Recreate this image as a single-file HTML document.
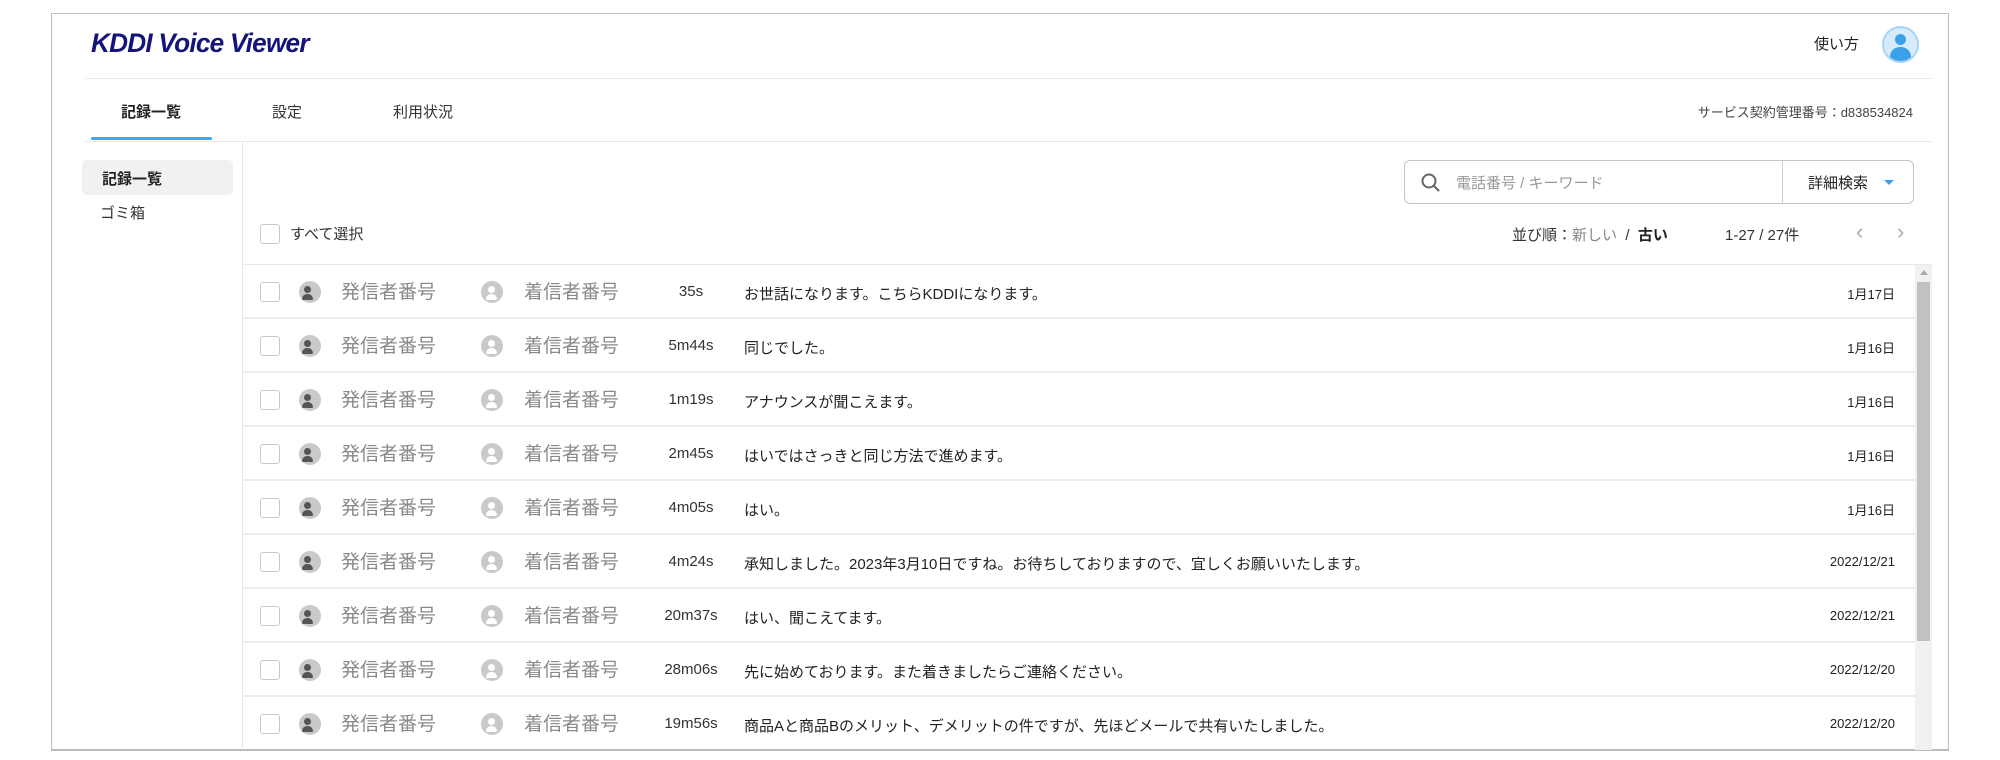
<!DOCTYPE html>
<html><head><meta charset="utf-8"><style>
*{margin:0;padding:0;box-sizing:border-box}
body{width:2000px;height:760px;background:#fff;font-family:"Liberation Sans","Noto Sans CJK JP",sans-serif;color:#222;position:relative;overflow:hidden}
.a{position:absolute;white-space:nowrap}
.card{position:absolute;left:51px;top:13px;width:1898px;height:738px;border:1px solid #bdbdbd;border-bottom:2px solid #bbb}
.hl{position:absolute;height:1px;background:#e8e8e8}
.cb{position:absolute;width:20px;height:20px;border:1px solid #c8c8c8;border-radius:3px;background:#fff}
.row{position:absolute;left:243px;width:1672px;height:54px;border-bottom:2px solid #ececec}
.ic{position:absolute;width:22px;height:22px;border-radius:50%;background:#c9c9c9;top:16px;overflow:hidden}
.ic:before{content:"";position:absolute;left:7px;top:5px;width:7px;height:7px;border-radius:50%;background:#fff}
.ic:after{content:"";position:absolute;left:5px;top:13px;width:11px;height:6px;border-radius:5px 5px 1px 1px;background:#fff}
.ic.s:before{left:5px;background:#555}
.ic.s:after{left:3px;background:#555}
.nm{position:absolute;top:12px;font-size:19px;color:#8a8a8a}
.du{position:absolute;left:398px;width:100px;text-align:center;top:18px;font-size:15px;color:#333}
.tx{position:absolute;left:501px;top:18px;font-size:15px;color:#222}
.dt{position:absolute;right:20px;top:19px;font-size:13px;color:#222}
</style></head><body>
<div class="card"></div>
<div class="a" style="left:91px;top:28px;font-size:27px;font-weight:bold;font-style:italic;color:#14147a;letter-spacing:-0.8px;transform:scaleX(0.97);transform-origin:left">KDDI Voice Viewer</div>
<div class="a" style="left:1814px;top:33px;font-size:15px">使い方</div>
<div class="a" style="left:1882px;top:26px;width:37px;height:37px;border-radius:50%;background:#d6ebfb;border:2px solid #a9d4f5;overflow:hidden">
<div style="position:absolute;left:11px;top:6px;width:11px;height:11px;border-radius:50%;background:#3aa0ea"></div>
<div style="position:absolute;left:6px;top:19px;width:21px;height:14px;border-radius:10px 10px 3px 3px;background:#3aa0ea"></div></div>
<div class="hl" style="left:85px;top:78px;width:1847px"></div>
<div class="a" style="left:121px;top:101px;font-size:15px;font-weight:bold">記録一覧</div>
<div class="a" style="left:272px;top:101px;font-size:15px;color:#333">設定</div>
<div class="a" style="left:393px;top:101px;font-size:15px;color:#333">利用状況</div>
<div class="a" style="left:91px;top:137px;width:121px;height:3px;background:#3ea6f0;border-radius:2px"></div>
<div class="a" style="right:87px;top:102px;font-size:13px;color:#444">サービス契約管理番号：d838534824</div>
<div class="hl" style="left:85px;top:141px;width:1847px"></div>
<div class="a" style="left:242px;top:142px;width:1px;height:608px;background:#e8e8e8"></div>
<div class="a" style="left:82px;top:160px;width:151px;height:35px;background:#f1f1f2;border-radius:5px"></div>
<div class="a" style="left:102px;top:168px;font-size:15px;font-weight:bold">記録一覧</div>
<div class="a" style="left:100px;top:202px;font-size:15px;color:#333">ゴミ箱</div>
<div class="a" style="left:1404px;top:160px;width:510px;height:44px;border:1px solid #c6c6c6;border-radius:6px"></div>
<div class="a" style="left:1782px;top:161px;width:1px;height:42px;background:#d0d0d0"></div>
<svg class="a" style="left:1420px;top:172px" width="22" height="22" viewBox="0 0 22 22"><circle cx="9" cy="9" r="6.5" fill="none" stroke="#666" stroke-width="2"/><path d="M14 14l5 5" stroke="#666" stroke-width="2.2"/></svg>
<div class="a" style="left:1456px;top:172px;font-size:15px;color:#999">電話番号 / キーワード</div>
<div class="a" style="left:1808px;top:172px;font-size:15px;color:#222">詳細検索</div>
<div class="a" style="left:1884px;top:180px;width:0;height:0;border-left:5px solid transparent;border-right:5px solid transparent;border-top:5px solid #3a9ee8"></div>
<div class="cb" style="left:260px;top:224px"></div>
<div class="a" style="left:290px;top:223px;font-size:15px;color:#333">すべて選択</div>
<div class="a" style="left:1512px;top:224px;font-size:15px;color:#333">並び順：<span style="color:#888">新しい</span> &nbsp;/ &nbsp;<b style="color:#222">古い</b></div>
<div class="a" style="left:1725px;top:224px;font-size:15px;color:#333">1-27 / 27件</div>
<div class="a" style="left:1856px;top:219px;font-size:22px;color:#aaa">‹</div>
<div class="a" style="left:1897px;top:219px;font-size:22px;color:#aaa">›</div>
<div class="hl" style="left:243px;top:264px;width:1689px"></div>
<div class="a" style="left:1915px;top:265px;width:17px;height:485px;background:#f1f1f1"></div>
<div class="a" style="left:1920px;top:270px;width:0;height:0;border-left:4px solid transparent;border-right:4px solid transparent;border-bottom:5px solid #aaa"></div>
<div class="a" style="left:1917px;top:282px;width:13px;height:359px;background:#c1c1c1"></div>
<div class="row" style="top:265px"><div class="cb" style="left:17px;top:17px"></div><div class="ic s" style="left:56px"></div><div class="nm" style="left:98px">発信者番号</div><div class="ic" style="left:238px"></div><div class="nm" style="left:281px">着信者番号</div><div class="du">35s</div><div class="tx">お世話になります。こちらKDDIになります。</div><div class="dt">1月17日</div></div>
<div class="row" style="top:319px"><div class="cb" style="left:17px;top:17px"></div><div class="ic s" style="left:56px"></div><div class="nm" style="left:98px">発信者番号</div><div class="ic" style="left:238px"></div><div class="nm" style="left:281px">着信者番号</div><div class="du">5m44s</div><div class="tx">同じでした。</div><div class="dt">1月16日</div></div>
<div class="row" style="top:373px"><div class="cb" style="left:17px;top:17px"></div><div class="ic s" style="left:56px"></div><div class="nm" style="left:98px">発信者番号</div><div class="ic" style="left:238px"></div><div class="nm" style="left:281px">着信者番号</div><div class="du">1m19s</div><div class="tx">アナウンスが聞こえます。</div><div class="dt">1月16日</div></div>
<div class="row" style="top:427px"><div class="cb" style="left:17px;top:17px"></div><div class="ic s" style="left:56px"></div><div class="nm" style="left:98px">発信者番号</div><div class="ic" style="left:238px"></div><div class="nm" style="left:281px">着信者番号</div><div class="du">2m45s</div><div class="tx">はいではさっきと同じ方法で進めます。</div><div class="dt">1月16日</div></div>
<div class="row" style="top:481px"><div class="cb" style="left:17px;top:17px"></div><div class="ic s" style="left:56px"></div><div class="nm" style="left:98px">発信者番号</div><div class="ic" style="left:238px"></div><div class="nm" style="left:281px">着信者番号</div><div class="du">4m05s</div><div class="tx">はい。</div><div class="dt">1月16日</div></div>
<div class="row" style="top:535px"><div class="cb" style="left:17px;top:17px"></div><div class="ic s" style="left:56px"></div><div class="nm" style="left:98px">発信者番号</div><div class="ic" style="left:238px"></div><div class="nm" style="left:281px">着信者番号</div><div class="du">4m24s</div><div class="tx">承知しました。2023年3月10日ですね。お待ちしておりますので、宜しくお願いいたします。</div><div class="dt">2022/12/21</div></div>
<div class="row" style="top:589px"><div class="cb" style="left:17px;top:17px"></div><div class="ic s" style="left:56px"></div><div class="nm" style="left:98px">発信者番号</div><div class="ic" style="left:238px"></div><div class="nm" style="left:281px">着信者番号</div><div class="du">20m37s</div><div class="tx">はい、聞こえてます。</div><div class="dt">2022/12/21</div></div>
<div class="row" style="top:643px"><div class="cb" style="left:17px;top:17px"></div><div class="ic s" style="left:56px"></div><div class="nm" style="left:98px">発信者番号</div><div class="ic" style="left:238px"></div><div class="nm" style="left:281px">着信者番号</div><div class="du">28m06s</div><div class="tx">先に始めております。また着きましたらご連絡ください。</div><div class="dt">2022/12/20</div></div>
<div class="row" style="top:697px;border-bottom:none"><div class="cb" style="left:17px;top:17px"></div><div class="ic s" style="left:56px"></div><div class="nm" style="left:98px">発信者番号</div><div class="ic" style="left:238px"></div><div class="nm" style="left:281px">着信者番号</div><div class="du">19m56s</div><div class="tx">商品Aと商品Bのメリット、デメリットの件ですが、先ほどメールで共有いたしました。</div><div class="dt">2022/12/20</div></div>
</body></html>
